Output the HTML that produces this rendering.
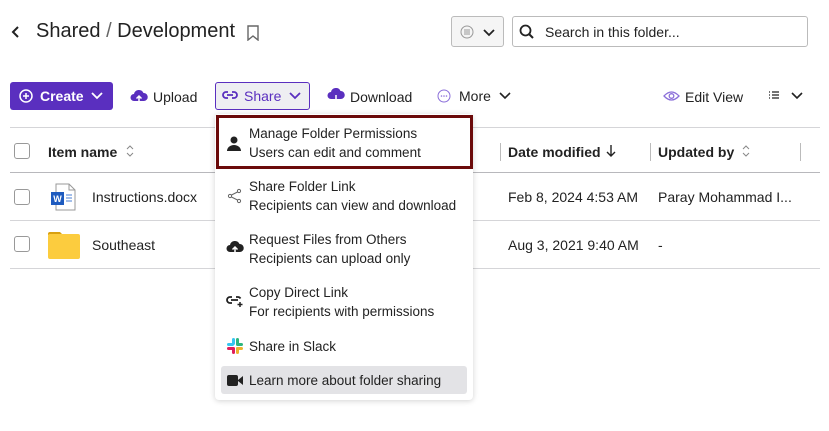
<!DOCTYPE html>
<html><head><meta charset="utf-8"><style>
*{box-sizing:border-box;margin:0;padding:0}
body{width:829px;height:431px;background:#fff;font-family:"Liberation Sans",sans-serif;color:#222;position:relative;overflow:hidden}
.a{position:absolute}
.t{font-size:14px;color:#222;white-space:nowrap}
.hl{position:absolute;left:10px;width:810px;height:1px;background:#d5d5d8}
.cb{position:absolute;left:14px;width:16px;height:16px;border:1px solid #999;border-radius:3px;background:#fff}
.mi{position:absolute;left:249px;font-size:13.5px;color:#222;line-height:19px;white-space:nowrap}
</style></head><body>
<svg class="a" style="left:10px;top:25px" width="12" height="14"><path d="M8 2 L3 7 L8 12" stroke="#222" stroke-width="2" fill="none"/></svg>
<div class="a" style="left:36px;top:20px;font-size:20px;color:#222">Shared <span style="color:#666">/</span> Development</div>
<svg class="a" style="left:246px;top:25px" width="14" height="16"><path d="M2 1h10v14l-5-4-5 4z" stroke="#666" stroke-width="1.4" fill="none"/></svg>
<div class="a" style="left:451px;top:16px;width:53px;height:31px;border:1px solid #bbb;border-radius:3px;background:#f5f5f5"></div>
<svg class="a" style="left:459px;top:24px" width="40" height="16"><circle cx="8" cy="8" r="6" fill="none" stroke="#999"/><path d="M5 6h6M5 8h6M5 10h6" stroke="#999"/><path d="M25 6l5 5 5-5" stroke="#222" stroke-width="1.8" fill="none"/></svg>
<div class="a" style="left:512px;top:16px;width:296px;height:31px;border:1px solid #bbb;border-radius:3px"></div>
<svg class="a" style="left:519px;top:24px" width="16" height="16"><circle cx="6.5" cy="6.5" r="5" stroke="#222" stroke-width="1.8" fill="none"/><path d="M10 10l4 4" stroke="#222" stroke-width="2"/></svg>
<div class="a t" style="left:545px;top:24px">Search in this folder...</div>

<div class="a" style="left:10px;top:82px;width:103px;height:28px;background:#5a2fbf;border-radius:3px"></div>
<svg class="a" style="left:19px;top:89px" width="14" height="14"><circle cx="7" cy="7" r="6" stroke="#fff" stroke-width="1.5" fill="none"/><path d="M7 4v6M4 7h6" stroke="#fff" stroke-width="1.5"/></svg>
<div class="a" style="left:40px;top:88px;font-size:14px;font-weight:bold;color:#fff">Create</div>
<svg class="a" style="left:90px;top:91px" width="14" height="10"><path d="M2 2l5 5 5-5" stroke="#fff" stroke-width="1.8" fill="none"/></svg>
<svg class="a" style="left:130px;top:89px" width="18" height="16"><path d="M4 12a3.5 3.5 0 0 1 0-7 5 5 0 0 1 9.5-1 3.8 3.8 0 0 1 0.5 8z" fill="#5a2fbf"/><path d="M9 14V7M6.5 9.5L9 7l2.5 2.5" stroke="#fff" stroke-width="1.5" fill="none"/></svg>
<div class="a t" style="left:153px;top:89px">Upload</div>
<div class="a" style="left:215px;top:82px;width:95px;height:28px;border:1px solid #5a2fbf;border-radius:3px;background:#eeeef2"></div>
<svg class="a" style="left:222px;top:89px" width="16" height="12"><path d="M6 3H4a3 3 0 0 0 0 6h2M10 3h2a3 3 0 0 1 0 6h-2M5 6h6" stroke="#5a2fbf" stroke-width="1.8" fill="none"/></svg>
<div class="a" style="left:244px;top:88px;font-size:14px;color:#5a2fbf">Share</div>
<svg class="a" style="left:288px;top:91px" width="14" height="10"><path d="M2 2l5 5 5-5" stroke="#5a2fbf" stroke-width="1.8" fill="none"/></svg>
<svg class="a" style="left:327px;top:88px" width="18" height="16"><path d="M4 11a3.5 3.5 0 0 1 0-7 5 5 0 0 1 9.5-1 3.8 3.8 0 0 1 0.5 8z" fill="#5a2fbf"/><path d="M9 7v7M6.5 11.5L9 14l2.5-2.5" stroke="#fff" stroke-width="1.5" fill="none"/></svg>
<div class="a t" style="left:350px;top:89px">Download</div>
<svg class="a" style="left:437px;top:89px" width="14" height="14"><circle cx="7" cy="7" r="6" stroke="#8b6fd9" fill="none"/><circle cx="4.5" cy="7" r=".8" fill="#8b6fd9"/><circle cx="7" cy="7" r=".8" fill="#8b6fd9"/><circle cx="9.5" cy="7" r=".8" fill="#8b6fd9"/></svg>
<div class="a t" style="left:459px;top:88px">More</div>
<svg class="a" style="left:498px;top:91px" width="14" height="10"><path d="M2 2l5 5 5-5" stroke="#222" stroke-width="1.6" fill="none"/></svg>
<svg class="a" style="left:663px;top:90px" width="17" height="12"><path d="M1 6q7.5-8 15 0q-7.5 8-15 0z" stroke="#8b6fd9" stroke-width="1.3" fill="none"/><circle cx="8.5" cy="6" r="2.3" stroke="#8b6fd9" stroke-width="1.3" fill="none"/></svg>
<div class="a t" style="left:685px;top:89px">Edit View</div>
<svg class="a" style="left:768px;top:91px" width="40" height="10"><path d="M1 1h1M1 4h1M1 7h1M4 1h7M4 4h7M4 7h7" stroke="#222" stroke-width="1.3"/><path d="M24 2l5 5 5-5" stroke="#222" stroke-width="1.6" fill="none"/></svg>

<div class="hl" style="top:127px"></div>
<div class="hl" style="top:172px;background:#b8b8bc"></div>
<div class="hl" style="top:220px"></div>
<div class="hl" style="top:268px"></div>
<div class="cb" style="top:143px"></div>
<div class="cb" style="top:189px"></div>
<div class="cb" style="top:236px"></div>
<div class="a t" style="left:48px;top:144px;font-weight:bold">Item name</div>
<svg class="a" style="left:126px;top:144px" width="8" height="14"><path d="M1 5l3-3 3 3M1 9l3 3 3-3" stroke="#888" fill="none"/></svg>
<div class="a" style="left:500px;top:143px;width:1px;height:18px;background:#bbb"></div>
<div class="a t" style="left:508px;top:144px;font-weight:bold">Date modified</div>
<svg class="a" style="left:606px;top:144px" width="10" height="14"><path d="M5 1v11M1 8l4 4 4-4" stroke="#222" stroke-width="1.4" fill="none"/></svg>
<div class="a" style="left:650px;top:143px;width:1px;height:18px;background:#bbb"></div>
<div class="a t" style="left:658px;top:144px;font-weight:bold">Updated by</div>
<svg class="a" style="left:742px;top:144px" width="8" height="14"><path d="M1 5l3-3 3 3M1 9l3 3 3-3" stroke="#888" fill="none"/></svg>
<div class="a" style="left:800px;top:143px;width:1px;height:18px;background:#bbb"></div>

<svg class="a" style="left:49px;top:183px" width="30" height="28"><path d="M7 1h13l6 6v20H7z" fill="#fff" stroke="#999"/><path d="M20 1v6h6" fill="none" stroke="#999"/><rect x="2" y="9" width="13" height="13" fill="#1e5bbf"/><text x="8.5" y="19" font-size="9" font-weight="bold" fill="#fff" text-anchor="middle" font-family="Liberation Sans">W</text><path d="M17 12h6M17 15h6M17 18h6" stroke="#4a7fd6"/></svg>
<div class="a t" style="left:92px;top:189px">Instructions.docx</div>
<svg class="a" style="left:48px;top:231px" width="33" height="28"><path d="M0 3a2 2 0 0 1 2-2h10l3 3h-15z" fill="#d9a010"/><rect x="0" y="3" width="32" height="25" rx="2" fill="#fccc3e"/></svg>
<div class="a t" style="left:92px;top:237px">Southeast</div>
<div class="a t" style="left:508px;top:189px">Feb 8, 2024 4:53 AM</div>
<div class="a t" style="left:658px;top:189px">Paray Mohammad I...</div>
<div class="a t" style="left:508px;top:237px">Aug 3, 2021 9:40 AM</div>
<div class="a t" style="left:658px;top:237px">-</div>

<div class="a" style="left:215px;top:114px;width:258px;height:286px;background:#fff;border-radius:4px;box-shadow:0 1px 6px rgba(0,0,0,.18)"></div>
<div class="a" style="left:216px;top:115px;width:257px;height:54px;border:3px solid #6b0a0a"></div>
<svg class="a" style="left:226px;top:135px" width="16" height="16"><circle cx="8" cy="5" r="3.5" fill="#222"/><path d="M1 16a7 6 0 0 1 14 0z" fill="#222"/></svg>
<div class="mi" style="top:124px">Manage Folder Permissions<br>Users can edit and comment</div>
<svg class="a" style="left:227px;top:187px" width="16" height="18"><circle cx="3" cy="9" r="1.6" fill="none" stroke="#666"/><circle cx="12" cy="4" r="1.6" fill="none" stroke="#666"/><circle cx="12" cy="14" r="1.6" fill="none" stroke="#666"/><path d="M4.5 8l6-3M4.5 10l6 3" stroke="#666"/></svg>
<div class="mi" style="top:177px">Share Folder Link<br>Recipients can view and download</div>
<svg class="a" style="left:226px;top:240px" width="18" height="16"><path d="M4 12a3.5 3.5 0 0 1 0-7 5 5 0 0 1 9.5-1 3.8 3.8 0 0 1 0.5 8z" fill="#222"/><path d="M9 15V7M6.5 9.5L9 7l2.5 2.5" stroke="#fff" stroke-width="1.5" fill="none"/></svg>
<div class="mi" style="top:230px">Request Files from Others<br>Recipients can upload only</div>
<svg class="a" style="left:226px;top:294px" width="18" height="14"><path d="M6 3H4a3 3 0 0 0 0 6h2M10 3h2a3 3 0 0 1 2.5 1.5M5 6h7" stroke="#222" stroke-width="1.8" fill="none"/><path d="M14 8v5M11.5 10.5h5" stroke="#222" stroke-width="1.5"/></svg>
<div class="mi" style="top:283px">Copy Direct Link<br>For recipients with permissions</div>
<svg class="a" style="left:227px;top:338px" width="16" height="16"><rect x="5" y="0" width="3" height="7" rx="1.5" fill="#36c5f0"/><rect x="0" y="5" width="7" height="3" rx="1.5" fill="#36c5f0"/><rect x="9" y="0" width="3" height="7" rx="1.5" fill="#2eb67d"/><rect x="9" y="5" width="7" height="3" rx="1.5" fill="#2eb67d"/><rect x="0" y="9" width="7" height="3" rx="1.5" fill="#e01e5a"/><rect x="5" y="9" width="3" height="7" rx="1.5" fill="#e01e5a"/><rect x="9" y="9" width="7" height="3" rx="1.5" fill="#ecb22e"/><rect x="9" y="9" width="3" height="7" rx="1.5" fill="#ecb22e"/></svg>
<div class="mi" style="top:337px">Share in Slack</div>
<div class="a" style="left:221px;top:366px;width:246px;height:28px;background:#e3e3e6;border-radius:3px"></div>
<svg class="a" style="left:227px;top:375px" width="17" height="11"><rect x="0" y="0" width="11" height="11" rx="2" fill="#222"/><path d="M11 5l5-4v9l-5-4z" fill="#222"/></svg>
<div class="mi" style="top:371px">Learn more about folder sharing</div>
</body></html>
